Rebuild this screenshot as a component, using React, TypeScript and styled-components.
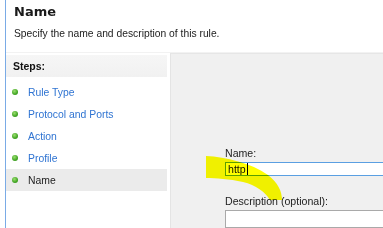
import React from "react";
import styled, { createGlobalStyle } from "styled-components";

const steps = ["Rule Type", "Protocol and Ports", "Action", "Profile", "Name"];

const App = () => {
  return (
    <>
      <GlobalStyle />
      <Page>
        <Frame>
          <Header>
            <Title>Name</Title>
            <Subtitle>Specify the name and description of this rule.</Subtitle>
          </Header>
          <Body>
            <StepsPane>
              <StepsHeader>Steps:</StepsHeader>
              <StepList>
                {steps.map((s) => (
                  <StepRow key={s} active={s === "Name"}>
                    <Dot />
                    <StepLabel active={s === "Name"}>{s}</StepLabel>
                  </StepRow>
                ))}
              </StepList>
            </StepsPane>
            <Spacer />
            <FormPanel>
              <FieldLabel>Name:</FieldLabel>
              <TextBox>
                http
                <Caret />
              </TextBox>
              <FieldLabel>Description (optional):</FieldLabel>
              <TextArea />
            </FormPanel>
          </Body>
        </Frame>
        <Highlight viewBox="0 0 383 228" width="383" height="228">
          <path
            d="M206 156 C226 157 251 163 268 175 C278 183 282 191 282 200 L270 200 C265 192 256 185 243 182 C229 179 216 178 206 178 Z"
            fill="#ffff00"
          />
        </Highlight>
      </Page>
    </>
  );
};

export default App;

const GlobalStyle = createGlobalStyle`
  html, body {
    margin: 0;
    padding: 0;
    background: #ffffff;
  }
  body {
    font-family: "Liberation Sans", Arial, sans-serif;
  }
`;

const Page = styled.div`
  position: relative;
  width: 383px;
  height: 228px;
  overflow: hidden;
  padding-left: 5px;
  box-sizing: border-box;
  background: #ffffff;
`;

const Frame = styled.div`
  display: flex;
  flex-direction: column;
  height: 100%;
  border-left: 1px solid #7aabe6;
`;

const Header = styled.div`
  display: flex;
  flex-direction: column;
  height: 53px;
  padding: 4px 0 0 8px;
  box-sizing: border-box;
  border-bottom: 1px solid #f2f2f2;
`;

const Title = styled.div`
  font-family: "DejaVu Sans", sans-serif;
  font-weight: 700;
  font-size: 13px;
  line-height: 16px;
  color: #1a1a1a;
`;

const Subtitle = styled.div`
  margin-top: 7px;
  font-size: 10.3px;
  line-height: 14px;
  color: #222222;
`;

const Body = styled.div`
  display: flex;
  flex: 1;
  min-height: 0;
`;

const StepsPane = styled.div`
  display: flex;
  flex-direction: column;
  width: 161px;
  padding-top: 2px;
  background: #ffffff;
`;

const StepsHeader = styled.div`
  height: 22px;
  padding-left: 7px;
  display: flex;
  align-items: center;
  background: linear-gradient(#f6f6f6, #f1f1f1);
  font-size: 10.5px;
  font-weight: 700;
  color: #111111;
`;

const StepList = styled.div`
  display: flex;
  flex-direction: column;
  padding-top: 4px;
`;

const StepRow = styled.div<{ active?: boolean }>`
  display: flex;
  align-items: center;
  height: 22px;
  padding-left: 6px;
  background: ${(p) => (p.active ? "#ebebeb" : "transparent")};
`;

const Dot = styled.span`
  width: 6px;
  height: 6px;
  border-radius: 50%;
  background: radial-gradient(circle at 40% 35%, #9be070, #42a524 60%, #2f8a18);
  margin-right: 10px;
`;

const StepLabel = styled.span<{ active?: boolean }>`
  font-size: 10.4px;
  color: ${(p) => (p.active ? "#222222" : "#2f74d2")};
`;

const Spacer = styled.div`
  width: 3px;
  background: #ffffff;
`;

const FormPanel = styled.div`
  flex: 1;
  display: flex;
  flex-direction: column;
  padding: 93px 0 0 54px;
  background: #f0f0f0;
  border-left: 1px solid #e4e4e4;
  border-top: 1px solid #e6e6e6;
`;

const FieldLabel = styled.div`
  font-size: 10.6px;
  line-height: 13px;
  color: #222222;
  margin-bottom: 2px;
`;

const TextBox = styled.div`
  display: flex;
  align-items: center;
  height: 17px;
  margin-right: -20px;
  margin-bottom: 19px;
  padding-left: 2px;
  border: 1px solid #5a9fe2;
  background: #ffffff;
  font-size: 10.6px;
  color: #111111;
`;

const Caret = styled.span`
  width: 1px;
  height: 12px;
  background: #000000;
  margin-left: 1px;
`;

const TextArea = styled.div`
  height: 60px;
  margin-right: -20px;
  border: 1px solid #a9a9a9;
  background: #ffffff;
`;

const Highlight = styled.svg`
  position: absolute;
  left: 0;
  top: 0;
  pointer-events: none;
  mix-blend-mode: multiply;
`;
